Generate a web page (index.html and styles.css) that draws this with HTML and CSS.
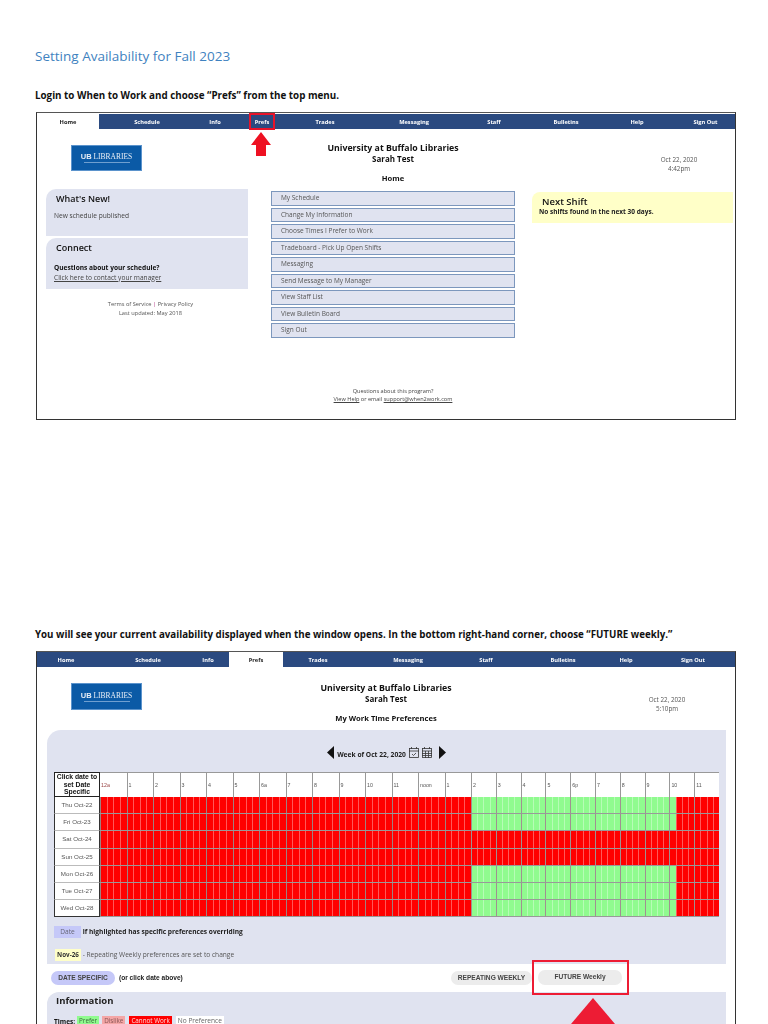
FILE: index.html
```html
<!DOCTYPE html>
<html lang="en">
<head>
    <meta charset="UTF-8">
    <meta name="viewport" content="width=device-width, initial-scale=1.0">
    <title>Setting Availability for Fall 2023</title>
    <link rel="stylesheet" href="styles.css">
</head>
<body>
<div class="doc">

    <h1 class="doc-title">Setting Availability for Fall 2023</h1>
    <p class="step">Login to When to Work and choose “Prefs” from the top menu.</p>

    <!-- first screenshot: home -->
    <div class="shot shot-home">
        <div class="shot-body">
            <nav class="tabs tabs-home">
                <a class="tab active">Home</a>
                <a class="tab">Schedule</a>
                <a class="tab">Info</a>
                <a class="tab">Prefs</a>
                <a class="tab">Trades</a>
                <a class="tab">Messaging</a>
                <a class="tab">Staff</a>
                <a class="tab">Bulletins</a>
                <a class="tab">Help</a>
                <a class="tab tab-last">Sign Out</a>
            </nav>

            <div class="head head-home">
                <div class="logo"><span><b>UB</b> LIBRARIES</span><i class="logo-line"></i></div>
                <div class="org">
                    <div class="org-name">University at Buffalo Libraries</div>
                    <div class="org-user">Sarah Test</div>
                    <div class="org-page">Home</div>
                </div>
                <div class="stamp">Oct 22, 2020<br>4:42pm</div>
            </div>

            <div class="home-main">
                <div class="home-left">
                    <section class="card card-new">
                        <h2>What's New!</h2>
                        <p>New schedule published</p>
                    </section>
                    <section class="card card-connect">
                        <h2>Connect</h2>
                        <p><b>Questions about your schedule?</b><br><u>Click here to contact your manager</u></p>
                    </section>
                    <div class="legal">Terms of Service <span class="pipe">|</span> Privacy Policy<br>Last updated: May 2018</div>
                </div>
                <div class="menu">
                    <a class="menu-item">My Schedule</a>
                    <a class="menu-item">Change My Information</a>
                    <a class="menu-item">Choose Times I Prefer to Work</a>
                    <a class="menu-item">Tradeboard - Pick Up Open Shifts</a>
                    <a class="menu-item">Messaging</a>
                    <a class="menu-item">Send Message to My Manager</a>
                    <a class="menu-item">View Staff List</a>
                    <a class="menu-item">View Bulletin Board</a>
                    <a class="menu-item">Sign Out</a>
                </div>
                <section class="next-shift">
                    <h2>Next Shift</h2>
                    <p>No shifts found in the next 30 days.</p>
                </section>
            </div>

            <div class="help">Questions about this program?<br><u>View Help</u> or email <u>support@when2work.com</u></div>
        </div>

        <div class="mark-prefs"></div>
        <svg class="arrow-up" width="20" height="24" viewBox="0 0 20 24"><path d="M10 0 20 13H15V24H5V13H0Z" fill="#ee1122"/></svg>
    </div>

    <p class="step step-two">You will see your current availability displayed when the window opens. In the bottom right-hand corner, choose “FUTURE weekly.”</p>

    <!-- second screenshot: preferences -->
    <div class="shot shot-prefs">
        <div class="shot-body">
            <nav class="tabs tabs-prefs">
                <a class="tab">Home</a>
                <a class="tab">Schedule</a>
                <a class="tab tab-info">Info</a>
                <a class="tab active">Prefs</a>
                <a class="tab">Trades</a>
                <a class="tab">Messaging</a>
                <a class="tab">Staff</a>
                <a class="tab">Bulletins</a>
                <a class="tab">Help</a>
                <a class="tab tab-signout">Sign Out</a>
            </nav>

            <div class="head head-prefs">
                <div class="logo"><span><b>UB</b> LIBRARIES</span><i class="logo-line"></i></div>
                <div class="org">
                    <div class="org-name">University at Buffalo Libraries</div>
                    <div class="org-user">Sarah Test</div>
                    <div class="org-page">My Work Time Preferences</div>
                </div>
                <div class="stamp">Oct 22, 2020<br>5:10pm</div>
            </div>

            <section class="times">
                <div class="week">
                    <svg width="7" height="13" viewBox="0 0 7 13"><path d="M7 0V13L0 6.500Z" fill="#111"/></svg>
                    <span class="week-label">Week of Oct 22, 2020</span>
                    <svg width="10" height="11" viewBox="0 0 10 11" fill="none" stroke="#333" stroke-width=".8"><rect x=".5" y="1.500" width="9" height="9"/><path d="M0 4H10M2.500 0V2M7.500 0V2M3 7 4.500 8.500 7 6"/></svg>
                    <svg width="10" height="11" viewBox="0 0 10 11" fill="none" stroke="#333" stroke-width=".8"><rect x=".5" y="1.500" width="9" height="9"/><path d="M0 4H10M0 6.500H10M0 8.500H10M3.500 4V11M6.500 4V11M2.500 0V2M7.500 0V2"/></svg>
                    <svg class="week-next" width="7" height="13" viewBox="0 0 7 13"><path d="M0 0V13L7 6.500Z" fill="#111"/></svg>
                </div>

                <div class="avail">
                    <div class="avail-head">
                        <div class="day day-title">Click date to set Date Specific</div>
                        <div class="hours">
                            <span class="first">12a</span><span>1</span><span>2</span><span>3</span><span>4</span><span>5</span><span>6a</span><span>7</span><span>8</span><span>9</span><span>10</span><span>11</span><span>noon</span><span>1</span><span>2</span><span>3</span><span>4</span><span>5</span><span>6p</span><span>7</span><span>8</span><span>9</span><span>10</span><span>11</span>
                        </div>
                    </div>
                    <div class="avail-row"><div class="day">Thu Oct-22</div><div class="slots"></div></div>
                    <div class="avail-row"><div class="day">Fri Oct-23</div><div class="slots"></div></div>
                    <div class="avail-row"><div class="day">Sat Oct-24</div><div class="slots all-red"></div></div>
                    <div class="avail-row"><div class="day">Sun Oct-25</div><div class="slots all-red"></div></div>
                    <div class="avail-row"><div class="day">Mon Oct-26</div><div class="slots"></div></div>
                    <div class="avail-row"><div class="day">Tue Oct-27</div><div class="slots"></div></div>
                    <div class="avail-row"><div class="day">Wed Oct-28</div><div class="slots"></div></div>
                </div>

                <div class="note note-date"><span class="chip-date">Date</span> <b>if highlighted has specific preferences overriding</b></div>
                <div class="note note-nov"><span class="chip-nov">Nov-26</span> - Repeating Weekly preferences are set to change</div>
            </section>

            <div class="modes">
                <span class="pill pill-blue">DATE SPECIFIC</span>
                <b class="modes-hint">(or click date above)</b>
                <span class="pill pill-repeat">REPEATING WEEKLY</span>
                <span class="pill pill-future">FUTURE Weekly</span>
            </div>

            <section class="info">
                <h2>Information</h2>
                <div class="legend">
                    <b>Times:</b>
                    <span class="key key-prefer">Prefer</span>
                    <span class="key key-dislike">Dislike</span>
                    <span class="key key-cannot">Cannot Work</span>
                    <span class="key key-none">No Preference</span>
                </div>
            </section>
        </div>

        <div class="mark-future"></div>
        <div class="arrow-tri"></div>
    </div>

</div>
</body>
</html>
```

FILE: styles.css
```css
html, body {
    margin: 0;
    height: 1024px;
    overflow: hidden;
    background: #fff;
}
body {
    font-family: "Open Sans", sans-serif;
    color: #111;
}
h1, h2, p {
    margin: 0;
}
.doc {
    padding-left: 35px;
    width: 701px;
}
.doc-title {
    font-size: 13.500px;
    font-weight: 400;
    line-height: 18px;
    color: #3f82c0;
    padding-top: 47px;
}
.step {
    font-size: 9.800px;
    font-weight: 700;
    line-height: 14px;
    margin-top: 24px;
    white-space: nowrap;
}
.step-two {
    margin-top: 208px;
    font-size: 9.750px;
}
.shot {
    position: relative;
    box-sizing: border-box;
    width: 700px;
    margin-left: 1px;
    border: 1px solid #333;
    border-top-color: #555;
}
.shot-home {
    height: 308px;
    margin-top: 9px;
}
.shot-prefs {
    height: 420px;
    margin-top: 9px;
}
.shot-body {
    filter: blur(.4px);
}

/* top menu */
.tabs {
    display: grid;
    height: 15px;
    margin-top: 1px;
    background: #2b4a80;
    font-size: 5.700px;
    font-weight: 700;
    line-height: 16px;
    text-align: center;
    color: #fff;
}
.tabs-home {
    grid-template-columns: 62px 96px 40px 54px 72px 106px 54px 90px 52px 71px;
}
.tabs-prefs {
    margin-top: 0;
    grid-template-columns: 58px 106px 28px 54px 70px 110px 46px 108px 18px 99px;
}
.tab-last {
    padding-left: 14px;
}
.tab-info {
    padding-right: 14px;
}
.tab-signout {
    padding-left: 17px;
}
.tab.active {
    background: #fff;
    color: #222;
}

/* heading under the menu */
.head {
    display: grid;
    font-size: 7px;
}
.head-home {
    grid-template-columns: 234px 244px 219px;
    height: 60px;
}
.head-prefs {
    grid-template-columns: 232px 234px 231px;
    height: 63px;
}
.logo {
    box-sizing: border-box;
    display: flex;
    flex-direction: column;
    align-items: center;
    justify-content: center;
    gap: 1px;
    width: 71px;
    height: 26px;
    margin: 16px 0 0 34px;
    background: #0b5aa6;
    border: 1px solid #5b93cc;
    color: #e8eef6;
    font-family: "Liberation Serif", serif;
    font-size: 7.500px;
    line-height: 8px;
}
.logo b {
    font-family: "Liberation Sans", sans-serif;
}
.logo-line {
    width: 46px;
    height: 1px;
    background: #6f9fd0;
}
.head-prefs .logo {
    height: 27px;
}
.org {
    text-align: center;
    font-weight: 700;
    padding-top: 14px;
}
.org-name {
    font-size: 8.750px;
    line-height: 11px;
}
.org-user {
    font-size: 8px;
    line-height: 10px;
}
.org-page {
    font-size: 7.600px;
    line-height: 10px;
    margin-top: 9px;
}
.head-prefs .org {
    padding-top: 15px;
}
.head-prefs .org-name {
    line-height: 12px;
}
.stamp {
    font-size: 6.300px;
    line-height: 9px;
    text-align: center;
    color: #555;
    padding-top: 26px;
}
.head-home .stamp {
    padding-left: 109px;
}
.head-prefs .stamp {
    padding-left: 97px;
    padding-top: 28px;
}

/* home page columns */
.home-main {
    display: grid;
    grid-template-columns: 234px 244px 219px;
    height: 170px;
}
.home-left {
    padding: 0 23px 0 9px;
}
.card {
    background: #e0e3f0;
    border-top-left-radius: 10px;
    font-size: 6.600px;
    padding: 5px 8px;
    box-sizing: border-box;
    color: #444;
}
.card h2 {
    font-size: 9px;
    line-height: 10px;
    font-weight: 600;
    color: #111;
    padding-left: 2px;
}
.card b {
    color: #111;
}
.card-new {
    height: 47px;
}
.card-new p {
    margin-top: 7px;
}
.card-connect {
    height: 51px;
    margin-top: 2px;
}
.card-connect p {
    margin-top: 10px;
    line-height: 9.500px;
}
.legal {
    font-size: 5.700px;
    line-height: 9px;
    text-align: center;
    color: #555;
    margin-top: 11px;
    padding-left: 7px;
}
.pipe {
    color: #b03080;
}
.menu {
    display: flex;
    flex-direction: column;
    gap: 2px;
    padding-top: 2px;
}
.menu-item {
    box-sizing: border-box;
    height: 14.500px;
    background: #e0e3f0;
    border: 1px solid #7c97bd;
    font-size: 6.500px;
    line-height: 12.500px;
    padding-left: 9px;
    color: #555;
}
.next-shift {
    box-sizing: border-box;
    width: 201px;
    height: 31px;
    margin: 3px 0 0 17px;
    padding: 4px 7px;
    background: #ffffc8;
    border-top-left-radius: 8px;
}
.next-shift h2 {
    font-size: 9.500px;
    line-height: 11px;
    font-weight: 600;
    padding-left: 3px;
}
.next-shift p {
    font-size: 6.500px;
    font-weight: 700;
    line-height: 9px;
    color: #222;
}
.help {
    font-size: 5.600px;
    line-height: 8px;
    text-align: center;
    color: #444;
    padding-top: 28px;
    margin-left: 14px;
}

/* availability panel */
.times {
    box-sizing: border-box;
    width: 679px;
    height: 234px;
    margin-left: 10px;
    padding: 16px 7px 0;
    background: #e0e3f0;
    border-top-left-radius: 14px;
}
.week {
    display: flex;
    align-items: center;
    justify-content: center;
    gap: 3px;
    height: 13px;
    margin-bottom: 13px;
}
.week-label {
    font-size: 6.700px;
    font-weight: 700;
    color: #222;
    padding-top: 4px;
}
.week-next {
    margin-left: 4px;
}
.avail {
    font-family: "Liberation Sans", sans-serif;
    width: 665px;
}
.avail-head,
.avail-row {
    display: flex;
}
.avail-row {
    height: 17.200px;
}
.day {
    box-sizing: border-box;
    flex: 0 0 46px;
    background: #fff;
    border-left: 1px solid #333;
    border-right: 1px solid #333;
    border-bottom: 1px solid #bbb;
    font-size: 6.200px;
    line-height: 16px;
    text-align: center;
    color: #555;
}
.avail-row:last-child .day {
    border-bottom-color: #333;
}
.day-title {
    height: 25px;
    border: 1px solid #222;
    font-size: 6.800px;
    font-weight: 700;
    line-height: 7.700px;
    color: #111;
}
.hours {
    display: grid;
    grid-template-columns: repeat(14, 26.500px) repeat(10, 24.800px);
    width: 619px;
    height: 25px;
    background: #fff;
    border-top: 1px solid #999;
    box-sizing: border-box;
}
.hours span {
    border-left: 1px solid #999;
    font-size: 5.300px;
    line-height: 24px;
    padding-left: 1px;
    color: #555;
}
.hours span.first {
    border-left: 0;
    color: #944;
}
.slots {
    --band: linear-gradient(90deg, #f00 0 371px, #90fb8f 371px 576px, #f00 576px);
    flex: 0 0 619px;
    border-bottom: 1px solid #999;
    box-sizing: border-box;
    background-repeat: no-repeat;
    background-image:
        repeating-linear-gradient(90deg, #a08080 0 1px, transparent 1px 26.500px),
        repeating-linear-gradient(90deg, #a09090 0 1px, transparent 1px 24.800px),
        repeating-linear-gradient(90deg, rgba(255, 255, 255, .35) 0 1px, transparent 1px 6.625px),
        repeating-linear-gradient(90deg, rgba(255, 255, 255, .35) 0 1px, transparent 1px 6.200px),
        var(--band);
    background-size: 371px 100%, 248px 100%, 371px 100%, 248px 100%, 100% 100%;
    background-position: 0 0, 371px 0, 0 0, 371px 0, 0 0;
}
.slots.all-red {
    --band: linear-gradient(#f00, #f00);
}
.note {
    font-size: 6.600px;
    color: #555;
}
.note b {
    color: #222;
}
.note-date {
    margin-top: 9px;
}
.note-nov {
    margin-top: 11px;
    padding-left: 1px;
}
.chip-date {
    display: inline-block;
    width: 27px;
    height: 12px;
    line-height: 12px;
    text-align: center;
    color: #667;
    background: #c5c8f8;
}
.chip-nov {
    display: inline-block;
    width: 26px;
    height: 12px;
    line-height: 12px;
    text-align: center;
    font-size: 6.300px;
    font-weight: 700;
    color: #333;
    background: #ffffc8;
}

/* mode buttons */
.modes {
    display: flex;
    align-items: center;
    height: 27px;
    padding-left: 14px;
    font-size: 6.600px;
    font-family: "Liberation Sans", sans-serif;
}
.pill {
    box-sizing: border-box;
    height: 14px;
    line-height: 14px;
    border-radius: 7px;
    text-align: center;
    font-weight: 700;
    color: #444;
}
.pill-blue {
    width: 64px;
    background: #c5c8f8;
}
.modes-hint {
    margin-left: 4px;
    color: #222;
    width: 332px;
}
.pill-repeat {
    width: 81px;
    background: #ececec;
}
.pill-future {
    width: 84px;
    height: 15px;
    margin-left: 6px;
    background: #ececec;
}

.info {
    box-sizing: border-box;
    width: 679px;
    height: 60px;
    margin: 1px 0 0 10px;
    padding: 4px 7px;
    background: #e0e3f0;
    border-top-left-radius: 12px;
}
.info h2 {
    font-size: 9.500px;
    line-height: 10px;
    font-weight: 700;
    padding-left: 2px;
    color: #222;
}
.legend {
    display: flex;
    align-items: center;
    gap: 3px;
    margin-top: 10px;
    font-size: 6.500px;
}
.key {
    height: 10px;
    line-height: 10px;
    padding: 0 2px;
    font-size: 6.300px;
}
.key-prefer {
    background: #90fb8f;
    color: #3a6a3a;
    margin-left: -1px;
}
.key-dislike {
    background: #f4a6a6;
    color: #855;
}
.key-cannot {
    background: #f00;
    color: #fdd;
    margin-left: 1px;
}
.key-none {
    background: #fff;
    color: #666;
    font-size: 6.600px;
    margin-left: 1px;
}

/* red marks pasted over the screenshots */
.mark-prefs {
    position: absolute;
    left: 212px;
    top: 0;
    width: 26px;
    height: 17px;
    box-sizing: border-box;
    border: 2px solid #e8132a;
}
.arrow-up {
    position: absolute;
    left: 214px;
    top: 19px;
}
.mark-future {
    position: absolute;
    left: 495px;
    top: 308px;
    width: 97px;
    height: 35px;
    box-sizing: border-box;
    border: 2px solid #ed1c34;
}
.arrow-tri {
    position: absolute;
    left: 534px;
    top: 346px;
    width: 0;
    height: 0;
    border-left: 22px solid transparent;
    border-right: 22px solid transparent;
    border-bottom: 26px solid #ed1c34;
}
```
